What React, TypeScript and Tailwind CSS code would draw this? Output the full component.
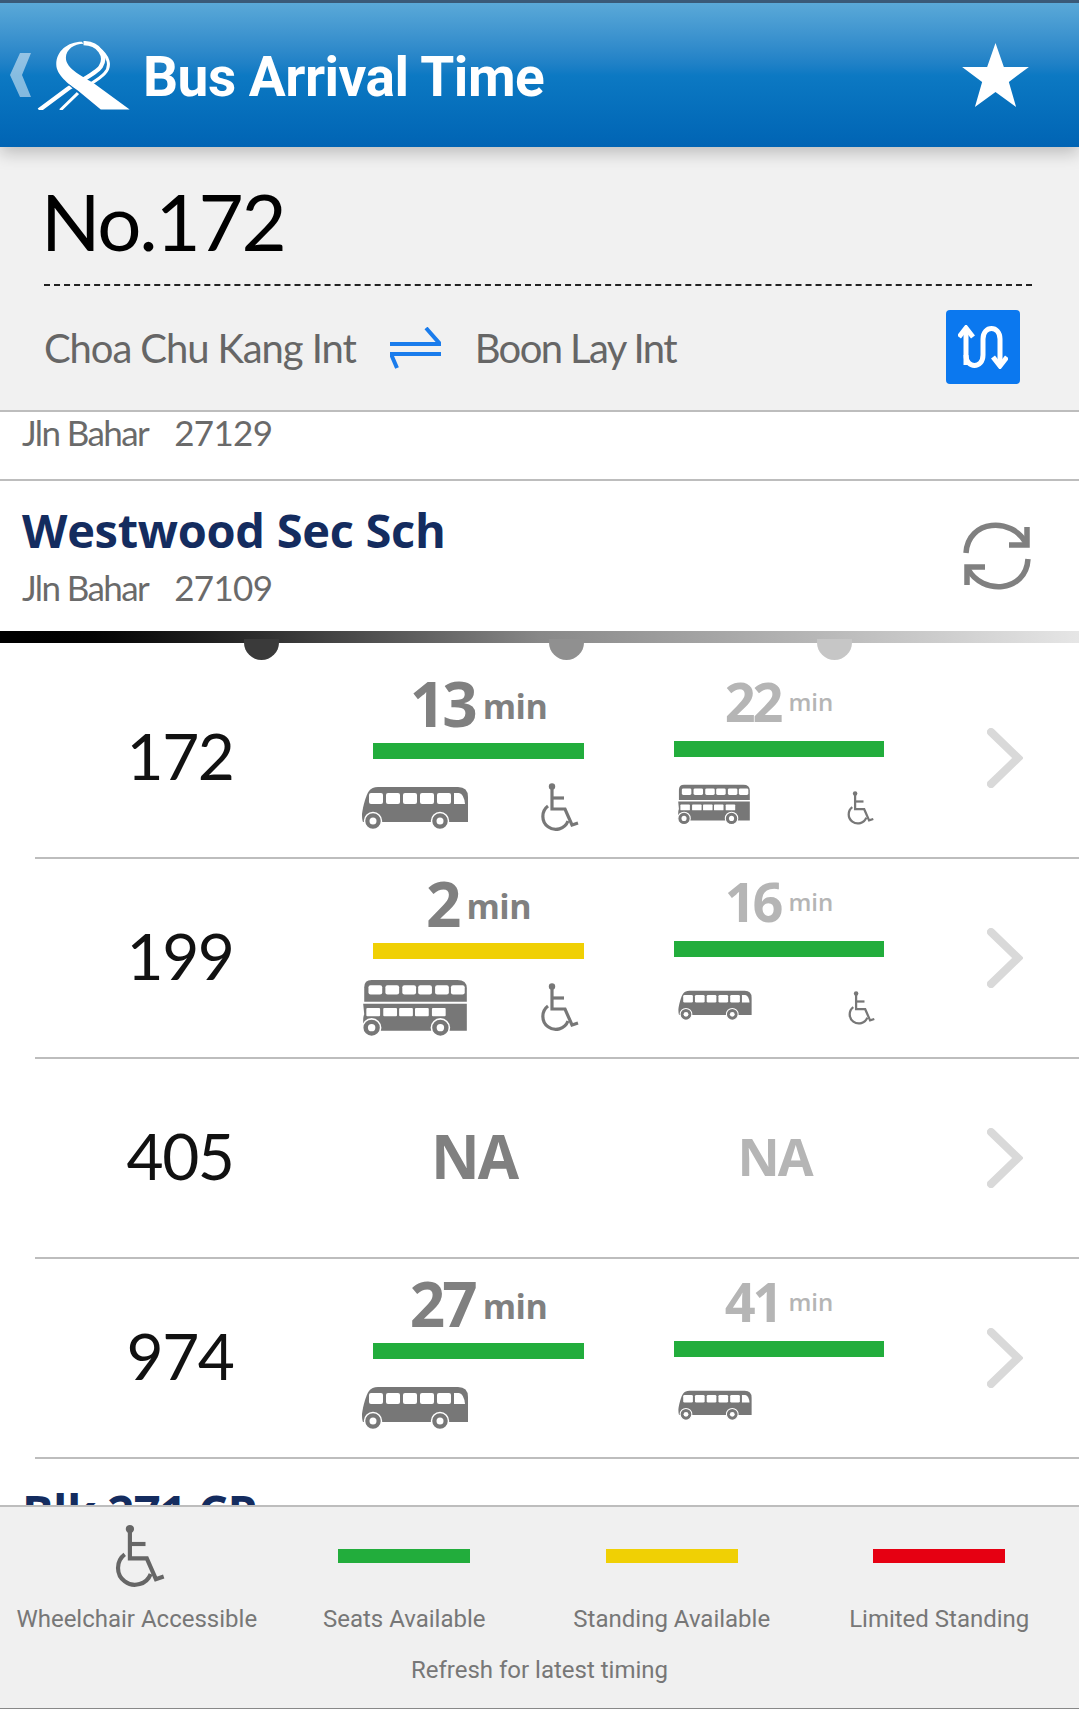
function BusIcon({ kind, className }: { kind: "single" | "double"; className: string }) {
  if (kind === "double") {
    return (
      <svg className={className} viewBox="0 0 104 56" fill="none" preserveAspectRatio="none">
        <path d="M4 22V8Q4 1 11 1H92Q101 1 101 9V22Z" fill="#777" />
        <path d="M3 24H101V50H3V40Q3 36 4 34Z" fill="#777" />
        {[8, 24, 40, 55, 71, 86].map((x) => (
          <rect key={x} x={x} y="6" width="13" height="9" rx="2" fill="#fff" />
        ))}
        {[6, 22, 37, 52, 68].map((x) => (
          <rect key={x} x={x} y="28" width="13" height="8" rx="1" fill="#fff" />
        ))}
        <circle cx="11" cy="47" r="8.5" fill="#777" stroke="#fff" strokeWidth="1.5" />
        <circle cx="11" cy="47" r="3.5" fill="#fff" />
        <circle cx="76" cy="47" r="8.5" fill="#777" stroke="#fff" strokeWidth="1.5" />
        <circle cx="76" cy="47" r="3.5" fill="#fff" />
      </svg>
    );
  }
  return (
    <svg className={className} viewBox="0 0 110 43" fill="none">
      <path d="M2 28C3 20 6 9 9 5Q12 1 18 1H98Q108 1 108 11V36H3Q2 34 2 28Z" fill="#777" />
      {[9, 26, 43, 60, 77].map((x) => (
        <rect key={x} x={x} y="7" width="14" height="11" rx="2" fill="#fff" />
      ))}
      <path d="M94 7H99Q104 8 105 18H94Z" fill="#fff" />
      <circle cx="13" cy="35" r="8.5" fill="#777" stroke="#fff" strokeWidth="1.5" />
      <circle cx="13" cy="35" r="3.5" fill="#fff" />
      <circle cx="80" cy="35" r="8.5" fill="#777" stroke="#fff" strokeWidth="1.5" />
      <circle cx="80" cy="35" r="3.5" fill="#fff" />
    </svg>
  );
}

function Wheelchair({ className }: { className: string }) {
  return (
    <svg className={className} viewBox="0 0 40 50" fill="none" stroke="currentColor" strokeWidth="3.2">
      <circle cx="13" cy="3.5" r="3.2" fill="currentColor" stroke="none" />
      <path d="M13 4V26H26L33 42L39 40" />
      <path d="M13 15H25" />
      <path d="M9 23A13 13 0 1 0 29 38" />
    </svg>
  );
}

function Logo() {
  return (
    <svg className="w-[93px] h-[69px]" viewBox="110 120 280 207" fill="none">
      <path d="M250 126C296 126 322 165 302 197C289 217 245 237 205 262L116 328" stroke="#fff" strokeWidth="13" />
      <path d="M292 140C327 165 334 195 314 217C297 237 262 252 240 270L180 328" stroke="#fff" strokeWidth="9" />
      <path d="M205 245L298 326" stroke="#0a6fbd" strokeWidth="10" />
      <path d="M245 122C202 122 168 150 168 190C168 222 205 250 232 268L302 326H389L285 250C250 226 197 205 197 170C197 145 222 128 250 128Z" fill="#fff" />
    </svg>
  );
}

function Arrival({
  first,
  time,
  color,
  bus,
  chair,
}: {
  first: boolean;
  time: string;
  color?: string;
  bus?: "single" | "double";
  chair?: boolean;
}) {
  if (!color) {
    return (
      <div className={first ? "w-[211px] h-[198px] pr-[9px] pb-[4px] flex items-center justify-center" : "w-[210px] h-[198px] pr-[9px] pb-[4px] flex items-center justify-center"}>
        {first ? (
          <span className="text-[60px] font-bold text-[#808080] font-['Open_Sans',sans-serif] tracking-[-2px]">NA</span>
        ) : (
          <span className="text-[52px] font-bold text-[#b5b5b5] font-['Open_Sans',sans-serif] tracking-[-2px]">NA</span>
        )}
      </div>
    );
  }
  return (
    <div className={first ? "w-[211px] flex flex-col" : "w-[210px] flex flex-col"}>
      {first ? (
        <div className="h-[84px] flex items-end justify-center gap-[8px] text-[#808080] font-['Open_Sans',sans-serif]">
          <span className="text-[62px] leading-[62px] font-bold tracking-[-3px] mb-[9px]">{time}</span>
          <span className="text-[34px] leading-[34px] font-bold mb-[20px] tracking-[-0.5px]">min</span>
        </div>
      ) : (
        <div className="h-[82px] flex items-end justify-center gap-[8px] text-[#b5b5b5] font-['Open_Sans',sans-serif]">
          <span className="text-[54px] leading-[54px] font-bold tracking-[-3px] mb-[13px]">{time}</span>
          <span className="text-[24px] leading-[24px] font-semibold mb-[27px]">min</span>
        </div>
      )}
      <div className={color === "green" ? "h-[16px] bg-[#22ad3c]" : "h-[16px] bg-[#f0d004]"} />
      {first ? (
        <div className="h-[60px] -ml-[13px] mt-[24px] flex items-start">
          {bus && <BusIcon kind={bus} className={bus === "double" ? "w-[110px] h-[58px] -mt-[4px]" : "w-[110px] h-[43px] mt-[3px]"} />}
          {chair && <Wheelchair className="w-[40px] h-[50px] ml-[69px] text-[#777]" />}
        </div>
      ) : (
        <div className="h-[60px] mt-[27px] flex items-start">
          {bus && <BusIcon kind={bus} className={bus === "double" ? "w-[76px] h-[41px] ml-[2px]" : "w-[76px] h-[30px] ml-[3px] mt-[6px]"} />}
          {chair && <Wheelchair className="w-[28px] h-[35px] ml-[94px] mt-[7px] text-[#777]" />}
        </div>
      )}
    </div>
  );
}

const rows = [
  { no: "172", a: { time: "13", color: "green", bus: "single", chair: true }, b: { time: "22", color: "green", bus: "double", chair: true } },
  { no: "199", a: { time: "2", color: "yellow", bus: "double", chair: true }, b: { time: "16", color: "green", bus: "single", chair: true } },
  { no: "405", a: { time: "NA" }, b: { time: "NA" } },
  { no: "974", a: { time: "27", color: "green", bus: "single", chair: false }, b: { time: "41", color: "green", bus: "single", chair: false } },
] as const;

function ServiceRow({ row }: { row: (typeof rows)[number] }) {
  return (
    <div className="h-[200px] ml-[35px] flex border-b-2 border-[#bdbdbd]">
      <div className="w-[290px] flex items-center justify-center pb-[4px] text-[64px] text-[#111] font-['Lato',sans-serif] tracking-[-1.5px]">
        {row.no}
      </div>
      <div className="ml-[48px]">
        <Arrival first {...row.a} />
      </div>
      <div className="ml-[90px]">
        <Arrival first={false} {...row.b} />
      </div>
      <div className="ml-[103px] flex items-center">
        <svg className="w-[36px] h-[60px]" viewBox="0 0 36 60" fill="none" stroke="#d9d9d9" strokeWidth="8" strokeLinecap="round">
          <path d="M4 4L31 30L4 56" />
        </svg>
      </div>
    </div>
  );
}

function StopAddress({ code }: { code: string }) {
  return (
    <div className="flex text-[35px] leading-[44px] text-[#6a6a6a] font-['Lato',sans-serif]">
      <span className="tracking-[-1.6px]">Jln Bahar</span>
      <span className="ml-[26px] tracking-[-0.7px]">{code}</span>
    </div>
  );
}

export default function App() {
  return (
    <div className="w-[1079px] h-[1709px] flex flex-col overflow-hidden bg-white font-['Roboto',sans-serif]">
      {/* Header */}
      <header className="relative z-10 h-[147px] shrink-0 border-t-[3px] border-[#3a5a78] bg-gradient-to-b from-[#5aa9d8] via-[#0c79c3] to-[#0164b4] shadow-[0_6px_16px_rgba(0,0,0,0.22)] flex items-center">
        <svg className="w-[22px] h-[44px] ml-[10px]" viewBox="0 0 22 44" fill="#ffffff" fillOpacity="0.5">
          <path d="M10 0H21L12 22L21 44H10L0 22Z" />
        </svg>
        <div className="ml-[5px]">
          <Logo />
        </div>
        <h1 className="ml-[13px] pt-[4px] text-[55px] font-bold text-white tracking-[-0.5px]">Bus Arrival Time</h1>
        <svg className="ml-auto mr-[50px] w-[67px] h-[64px]" viewBox="0 0 24 23" fill="#fff">
          <path d="M12 0L15 8.6H24L16.8 14L19.4 23L12 17.6L4.6 23L7.2 14L0 8.6H9Z" />
        </svg>
      </header>

      {/* Route summary */}
      <section className="h-[265px] shrink-0 bg-[#f1f1f1] border-b-2 border-[#bdbdbd] pl-[44px] pr-[47px] flex flex-col">
        <div className="h-[139px] border-b-2 border-dashed border-[#222] flex items-center pt-[12px] text-[78px] text-black font-['Lato',sans-serif] tracking-[-2.2px]">
          <span className="-ml-[3px]">No.172</span>
        </div>
        <div className="flex-1 flex items-center text-[40px] text-[#666] font-['Lato',sans-serif]">
          <span className="tracking-[-1.1px]">Choa Chu Kang Int</span>
          <svg className="ml-[34px] w-[51px] h-[42px]" viewBox="0 0 51 42" fill="none" stroke="#1a7cec" strokeWidth="4">
            <path d="M0 17H50L36 1" />
            <path d="M51 27H1L7 41" />
          </svg>
          <span className="ml-[34px] tracking-[-1.6px]">Boon Lay Int</span>
          <button className="ml-auto mr-[12px] mb-[2px] w-[74px] h-[74px] rounded-[4px] bg-[#0b78ef] flex items-center justify-center">
            <svg className="w-[50px] h-[44px]" viewBox="0 0 50 44" fill="none" stroke="#fff" strokeWidth="5">
              <path d="M8 40V4" />
              <path d="M1 12L8 3L15 12" />
              <path d="M8 30C8 44 25 44 25 30V14C25 0 42 0 42 14V40" />
              <path d="M35 32L42 41L49 32" />
            </svg>
          </button>
        </div>
      </section>

      {/* Scrolled stop list */}
      <main className="flex-1 min-h-0 overflow-hidden">
        <div className="h-[69px] border-b-2 border-[#bdbdbd] pl-[22px] flex items-start">
          <div className="-mt-[2px]">
            <StopAddress code="27129" />
          </div>
        </div>
        <div className="h-[150px] pl-[22px] pr-[47px] flex items-start justify-between">
          <div>
            <h2 className="mt-[20px] text-[47px] leading-[58px] font-bold text-[#142c5f] font-['Open_Sans',sans-serif] tracking-[-0.3px]">Westwood Sec Sch</h2>
            <div className="mt-[6px]">
              <StopAddress code="27109" />
            </div>
          </div>
          <svg className="w-[70px] h-[70px] mt-[40px]" viewBox="0 0 70 70" fill="none" stroke="#808080" strokeWidth="5.5">
            <path d="M4 32C6 -2 50 -4 64 22" />
            <path d="M65 6V24H47" />
            <path d="M66 38C64 72 20 74 6 48" />
            <path d="M5 64V46H23" />
          </svg>
        </div>
        <div className="relative h-[28px]">
          <div className="h-[12px] bg-gradient-to-r from-black via-[#888] to-[#e6e6e6]" />
          <div className="absolute left-[244px] top-[8px] w-[35px] h-[21px] rounded-b-full bg-[#3a3a3a]" />
          <div className="absolute left-[549px] top-[8px] w-[35px] h-[21px] rounded-b-full bg-[#909090]" />
          <div className="absolute left-[817px] top-[8px] w-[35px] h-[21px] rounded-b-full bg-[#c6c6c6]" />
        </div>
        {rows.map((row) => (
          <ServiceRow key={row.no} row={row} />
        ))}
        <h2 className="pl-[22px] mt-[23px] text-[47px] leading-[58px] font-bold text-[#142c5f] font-['Open_Sans',sans-serif] tracking-[-0.5px]">Blk 271 CP</h2>
      </main>

      {/* Legend */}
      <footer className="h-[204px] shrink-0 bg-[#f0f0f0] border-t-2 border-b border-t-[#bdbdbd] border-b-[#888] flex flex-col">
        <div className="pl-[3px] grid grid-cols-[repeat(4,267.5px)] text-[24px] text-[#777] text-center">
          <div className="flex flex-col items-center">
            <div className="h-[94px] flex items-center pt-[6px]">
              <Wheelchair className="w-[52px] h-[66px] ml-[4px] text-[#666]" />
            </div>
            <span>Wheelchair Accessible</span>
          </div>
          <div className="flex flex-col items-center">
            <div className="h-[94px] flex items-center pt-[4px]">
              <div className="w-[132px] h-[14px] bg-[#22ad3c]" />
            </div>
            <span>Seats Available</span>
          </div>
          <div className="flex flex-col items-center">
            <div className="h-[94px] flex items-center pt-[4px]">
              <div className="w-[132px] h-[14px] bg-[#f0d004]" />
            </div>
            <span>Standing Available</span>
          </div>
          <div className="flex flex-col items-center">
            <div className="h-[94px] flex items-center pt-[4px]">
              <div className="w-[132px] h-[14px] bg-[#e60012]" />
            </div>
            <span>Limited Standing</span>
          </div>
        </div>
        <p className="mt-[15px] text-center text-[24px] text-[#777]">Refresh for latest timing</p>
      </footer>
    </div>
  );
}
